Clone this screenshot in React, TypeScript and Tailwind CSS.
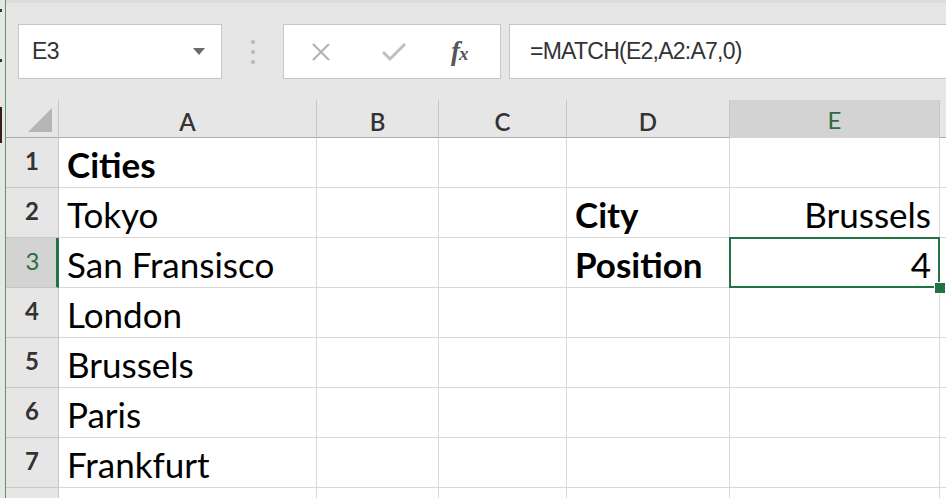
import React from 'react'

const cols = ['A', 'B', 'C', 'D', 'E']

type Cell = { text?: string; bold?: boolean; right?: boolean }

const rows: Cell[][] = [
    [{ text: 'Cities', bold: true }, {}, {}, {}, {}],
    [{ text: 'Tokyo' }, {}, {}, { text: 'City', bold: true }, { text: 'Brussels', right: true }],
    [{ text: 'San Fransisco' }, {}, {}, { text: 'Position', bold: true }, { text: '4', right: true }],
    [{ text: 'London' }, {}, {}, {}, {}],
    [{ text: 'Brussels' }, {}, {}, {}, {}],
    [{ text: 'Paris' }, {}, {}, {}, {}],
    [{ text: 'Frankfurt' }, {}, {}, {}, {}],
    [{}, {}, {}, {}, {}],
]

function Toolbar() {
    return (
        <div className="h-[100px] shrink-0 flex items-start pt-[21px] pl-[12px] border-t-[3px] border-[#dcdcdc] font-['Liberation_Sans',Arial,sans-serif]">
            {/* Name box */}
            <div className="w-[204px] h-[55px] bg-white border border-[#c6c6c6] flex items-center pl-[13px] pr-[16px] justify-between">
                <span className="text-[23px] text-[#333] tracking-[-0.6px]">E3</span>
                <svg width="12" height="7" viewBox="0 0 12 7">
                    <polygon points="0,0 12,0 6,7" fill="#6b6b6b" />
                </svg>
            </div>
            {/* Separator dots */}
            <div className="w-[61px] h-[55px] flex flex-col items-center justify-center gap-[6px]">
                <span className="w-[4px] h-[4px] rounded-full bg-[#b8b8b8]" />
                <span className="w-[4px] h-[4px] rounded-full bg-[#b8b8b8]" />
                <span className="w-[4px] h-[4px] rounded-full bg-[#b8b8b8]" />
            </div>
            {/* Cancel / enter / fx */}
            <div className="w-[218px] h-[55px] bg-white border border-[#c6c6c6] flex items-center">
                <svg className="ml-[27px]" width="20" height="20" viewBox="0 0 20 20">
                    <path d="M2 2 L18 18 M18 2 L2 18" stroke="#b4b4b4" strokeWidth="2.2" fill="none" />
                </svg>
                <svg className="ml-[50px]" width="26" height="20" viewBox="0 0 26 20">
                    <path d="M2 10 L9 17 L24 2" stroke="#c0c0c0" strokeWidth="3" fill="none" />
                </svg>
                <span className="ml-[44px] text-[27px] leading-none italic font-bold text-[#555] font-['Liberation_Serif',serif] tracking-[-1px]">
                    f<span className="text-[19px]">x</span>
                </span>
            </div>
            {/* Formula input */}
            <div className="ml-[8px] flex-1 h-[55px] bg-white border border-[#c6c6c6] border-r-0 flex items-center pl-[20px]">
                <span className="text-[23px] text-[#333] tracking-[-0.75px]">=MATCH(E2,A2:A7,0)</span>
            </div>
        </div>
    )
}

export default function App() {
    const grid = 'grid grid-cols-[53px_258px_122px_128px_163px_210px_1fr]'
    return (
        <div className="w-[946px] h-[498px] overflow-hidden bg-[#e6e6e6] flex">
            {/* window edge */}
            <div className="w-[5px] shrink-0 bg-[#e6e6e6] flex flex-col">
                <div className="mt-[9px] w-[2px] h-[3px] bg-[#333]" />
                <div className="mt-[47px] w-[2px] h-[3px] bg-[#333]" />
                <div className="mt-[45px] w-[2px] h-[36px] bg-[#3a1a1a]" />
            </div>
            <div className="w-[1px] shrink-0 bg-[#5f9467]" />
            <div className="flex-1 flex flex-col">
                <Toolbar />
                <div className="shrink-0 font-['Lato','Open_Sans',sans-serif]">
                    {/* Column headers */}
                    <div className={`${grid} h-[38px] border-b border-[#ababab]`}>
                        <div className="relative border-r border-[#c6c6c6]">
                            <svg className="absolute left-[22px] top-[8px]" width="24" height="24" viewBox="0 0 24 24">
                                <polygon points="24,0 24,24 0,24" fill="#b5b5b5" />
                            </svg>
                        </div>
                        {cols.map((c) =>
                            c === 'E' ? (
                                <div
                                    key={c}
                                    className="bg-[#d3d3d3] border-r border-[#c6c6c6] border-b-[3px] border-b-[#217346] flex items-center justify-center text-[24px] text-[#2f6b43] pt-[2px]"
                                >
                                    {c}
                                </div>
                            ) : (
                                <div
                                    key={c}
                                    className="border-r border-[#c6c6c6] flex items-center justify-center text-[24px] font-semibold text-[#333] pt-[2px]"
                                >
                                    {c}
                                </div>
                            )
                        )}
                        <div />
                    </div>
                    {/* Rows */}
                    {rows.map((row, r) => {
                        const sel = r === 2
                        return (
                            <div key={r} className={`${grid} h-[50px] ${sel ? 'relative z-10' : ''}`}>
                                <div
                                    className={
                                        sel
                                            ? 'bg-[#d3d3d3] border-r-[3px] border-[#217346] border-b border-b-[#c6c6c6] flex items-end justify-center pb-[8px] pl-[3px] text-[24px] text-[#2f6b43]'
                                            : 'border-r border-b border-[#c6c6c6] flex items-end justify-center pb-[8px] text-[24px] font-bold text-[#333]'
                                    }
                                >
                                    {r < 7 ? r + 1 : ''}
                                </div>
                                {row.map((cell, c) => (
                                    <div
                                        key={c}
                                        className={`relative bg-white border-r border-b border-[#d8d8d8] flex items-end pb-[5px] px-[8px] text-[35px] leading-none text-black whitespace-nowrap ${cell.right ? 'justify-end' : ''} ${cell.bold ? 'font-bold' : ''}`}
                                    >
                                        {cell.text}
                                        {sel && c === 4 && (
                                            <>
                                                <div className="absolute -left-[1px] -top-[1px] -right-[1px] -bottom-[1px] border-2 border-[#217346]" />
                                                <div className="absolute -right-[7px] -bottom-[7px] w-[12px] h-[12px] bg-[#217346] border border-white" />
                                            </>
                                        )}
                                    </div>
                                ))}
                                <div className="bg-white border-b border-[#d8d8d8]" />
                            </div>
                        )
                    })}
                </div>
            </div>
        </div>
    )
}
